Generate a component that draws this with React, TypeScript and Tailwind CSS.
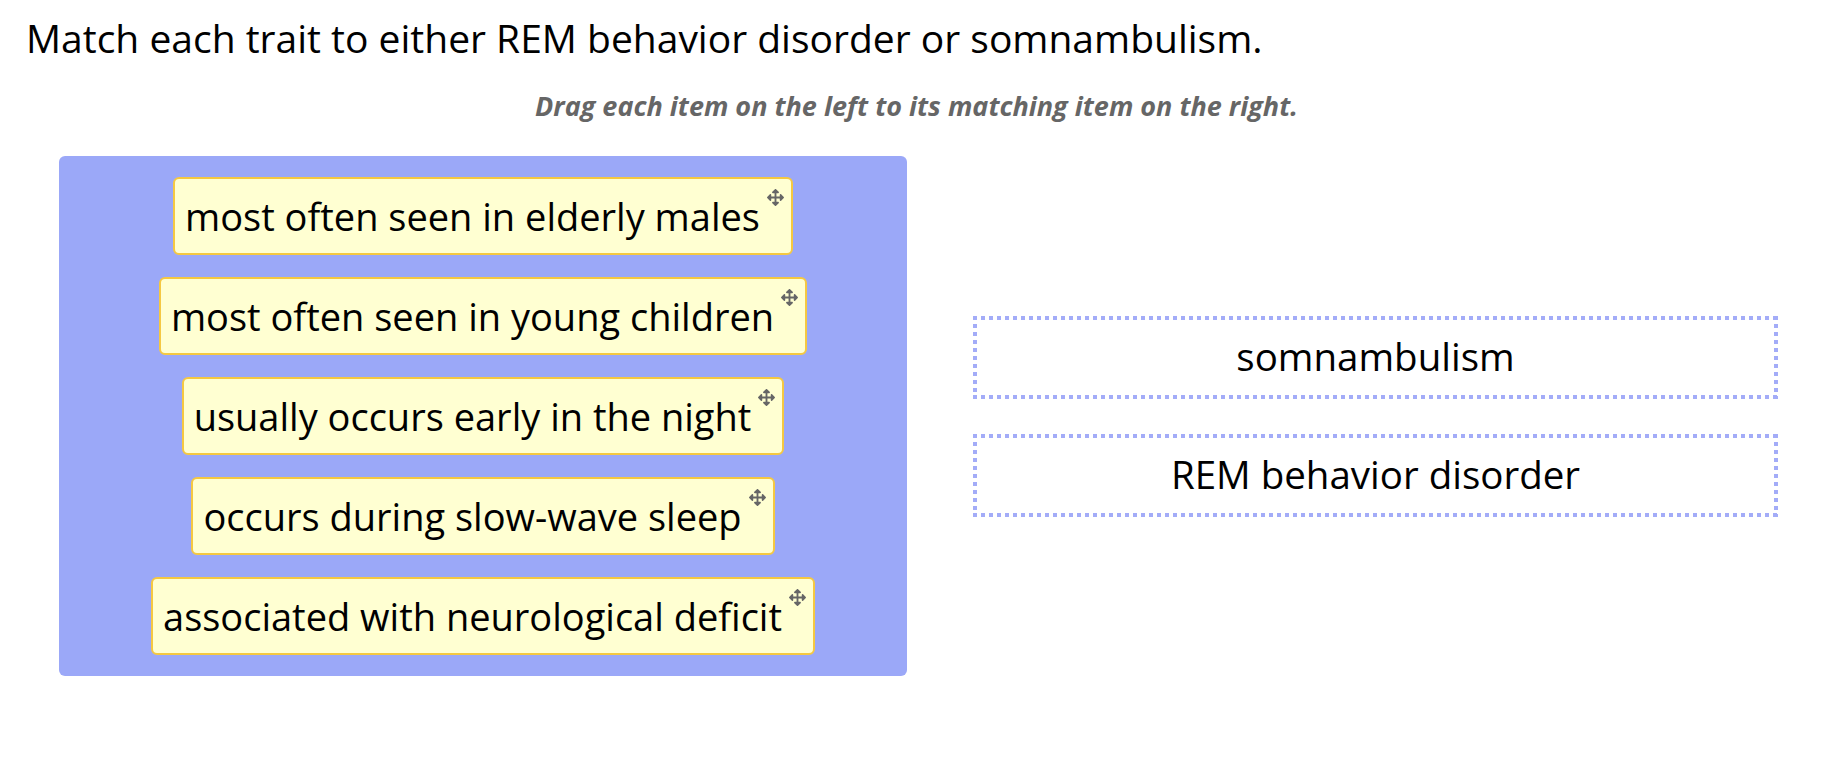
import React from 'react';
import { FaArrowsAlt } from 'react-icons/fa';

const traits = [
  'most often seen in elderly males',
  'most often seen in young children',
  'usually occurs early in the night',
  'occurs during slow-wave sleep',
  'associated with neurological deficit',
];

const targets = ['somnambulism', 'REM behavior disorder'];

// square-dot outline for the drop zones
const dottedEdge =
  '[background-image:linear-gradient(to_right,#a3acf8_50%,transparent_50%),linear-gradient(to_right,#a3acf8_50%,transparent_50%),linear-gradient(to_bottom,#a3acf8_50%,transparent_50%),linear-gradient(to_bottom,#a3acf8_50%,transparent_50%)] [background-size:8px_4px,8px_4px,4px_8px,4px_8px] [background-position:0_0,0_100%,0_0,100%_0] [background-repeat:repeat-x,repeat-x,repeat-y,repeat-y]';

const DragItem: React.FC<{ label: string }> = ({ label }) => (
  <div className="flex items-start h-[78px] pl-[10px] pr-[7px] bg-[#ffffd2] border-2 border-[#f5c842] rounded-[6px] cursor-move">
    <span className="self-center text-[38px] leading-none text-black">{label}</span>
    <FaArrowsAlt className="mt-[10px] ml-[7px] w-[17px] h-[17px] text-[#666666]" />
  </div>
);

export default function App() {
  return (
    <div className="w-[1833px] h-[770px] bg-white font-['Open_Sans',sans-serif]">
      <h1 className="pl-[26px] pt-[14px] text-[39px] leading-[48px] text-black">
        Match each trait to either REM behavior disorder or somnambulism.
      </h1>
      <p className="mt-[28px] text-center text-[27px] leading-[32px] font-bold italic text-[#666666]">
        Drag each item on the left to its matching item on the right.
      </p>
      <div className="flex items-center mt-[34px] pl-[59px] pr-[55px] gap-[66px]">
        <div className="w-[848px] py-[21px] flex flex-col items-center gap-[22px] bg-[#9ba8f8] rounded-[6px]">
          {traits.map((t) => (
            <DragItem key={t} label={t} />
          ))}
        </div>
        <div className="flex-1 flex flex-col gap-[35px]">
          {targets.map((t) => (
            <div
              key={t}
              className={`h-[83px] flex items-center justify-center text-[38.5px] text-black ${dottedEdge}`}
            >
              {t}
            </div>
          ))}
        </div>
      </div>
    </div>
  );
}
